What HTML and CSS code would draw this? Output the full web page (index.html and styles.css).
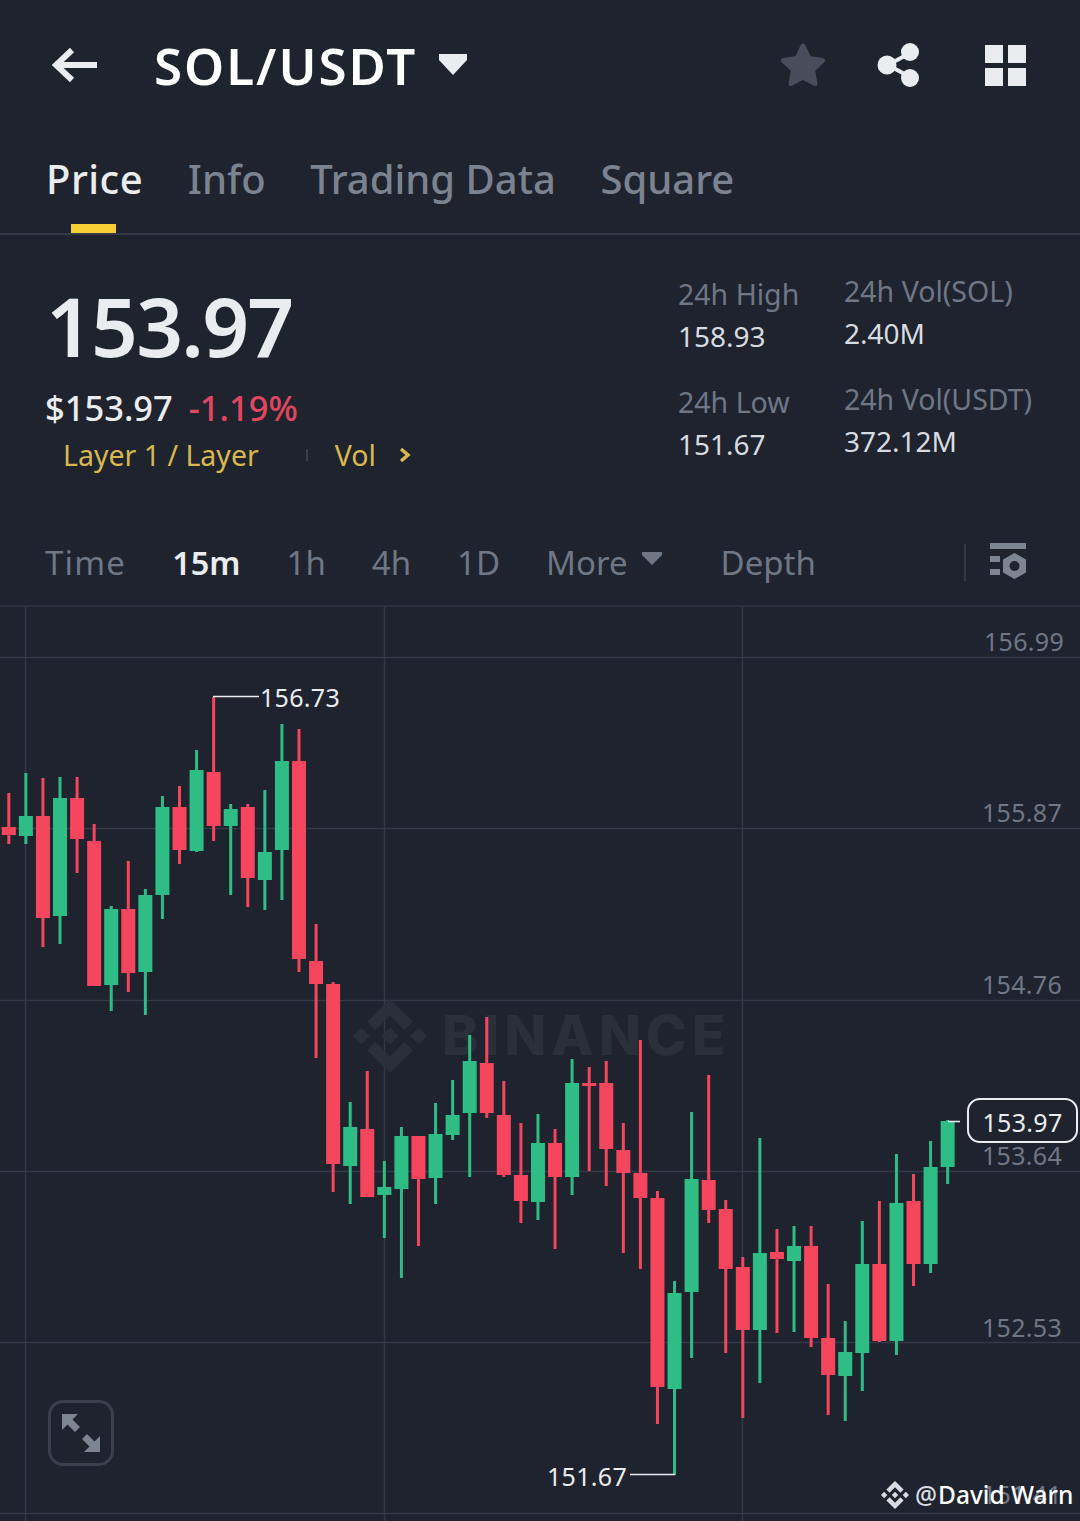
FILE: index.html
```html
<!DOCTYPE html>
<html lang="en">
<head>
    <meta charset="UTF-8">
    <meta name="viewport" content="width=device-width, initial-scale=1.0">
    <title>SOL/USDT</title>
    <link rel="stylesheet" href="styles.css">
</head>
<body>
    <div class="page">
        <header class="top-bar">
            <svg class="icon-back" viewBox="0 0 46 36"><path d="M20 3 L4 18 L20 33 M4 18 H45" /></svg>
            <h1 class="pair">SOL/USDT</h1>
            <svg class="icon-caret" viewBox="0 0 28 21"><path d="M0 0 H28 V6 L14 21 L0 6 Z" /></svg>
            <div class="top-actions">
                <svg class="icon-star" viewBox="0 0 46 46"><path d="M23 4 L29 16.5 L42.500 18.500 L32.500 28 L35 41.500 L23 35 L11 41.500 L13.500 28 L3.500 18.500 L17 16.500 Z" /></svg>
                <svg class="icon-share" viewBox="0 0 44 46">
                    <path d="M33 11 L11 23 L33 35" />
                    <circle cx="33" cy="10" r="9" />
                    <circle cx="10" cy="23" r="9.500" />
                    <circle cx="33" cy="36" r="9" />
                </svg>
                <svg class="icon-grid" viewBox="0 0 41 41">
                    <rect x="0" y="0" width="18" height="18" />
                    <rect x="23" y="0" width="18" height="18" />
                    <rect x="0" y="23" width="18" height="18" />
                    <rect x="23" y="23" width="18" height="18" />
                </svg>
            </div>
        </header>

        <nav class="tabs">
            <a class="tab tab-active">Price</a>
            <a class="tab">Info</a>
            <a class="tab">Trading Data</a>
            <a class="tab">Square</a>
        </nav>

        <section class="summary">
            <div class="summary-left">
                <div class="last-price">153.97</div>
                <div class="price-line">
                    <span class="price-usd">$153.97</span>
                    <span class="price-change">-1.19%</span>
                </div>
                <div class="tag-line">
                    <span>Layer 1 / Layer</span>
                    <i class="tag-sep"></i>
                    <span>Vol</span>
                    <svg class="icon-chevron" viewBox="0 0 12 16"><path d="M2 2 L9 8 L2 14" /></svg>
                </div>
            </div>
            <div class="stats stats-price">
                <div class="stat-label">24h High</div>
                <div class="stat-value">158.93</div>
                <div class="stat-label">24h Low</div>
                <div class="stat-value">151.67</div>
            </div>
            <div class="stats stats-vol">
                <div class="stat-label">24h Vol(SOL)</div>
                <div class="stat-value">2.40M</div>
                <div class="stat-label">24h Vol(USDT)</div>
                <div class="stat-value">372.12M</div>
            </div>
        </section>

        <div class="intervals">
            <span class="interval-time">Time</span>
            <span class="interval-active">15m</span>
            <span>1h</span>
            <span>4h</span>
            <span>1D</span>
            <span class="interval-more">More
                <svg class="icon-more" viewBox="0 0 20 13"><path d="M0 0 H20 V3 L10 13 L0 3 Z" /></svg>
            </span>
            <span class="interval-depth">Depth</span>
            <i class="interval-sep"></i>
            <svg class="icon-settings" viewBox="0 0 36 36">
                <rect x="0" y="0" width="36" height="6" />
                <rect x="0" y="13" width="10" height="6" />
                <rect x="0" y="26" width="10" height="6" />
                <path fill-rule="evenodd" d="M24.500 10 L36 16.500 V29.500 L24.500 36 L13 29.500 V16.500 Z M24.500 18 A5 5 0 1 0 24.500 28 A5 5 0 1 0 24.500 18 Z" />
            </svg>
        </div>

        <div class="chart">
            <svg class="chart-svg" viewBox="0 607 1080 914">
                <g class="grid">
                    <path d="M0 657.500 H1080 M0 828.500 H1080 M0 1000.500 H1080 M0 1171.500 H1080 M0 1342.500 H1080 M0 1513.500 H1080" />
                    <path d="M25.500 607 V1521 M384.500 607 V1521 M742.500 607 V1521" />
                </g>
                <g class="watermark">
                    <svg x="353" y="999" width="74" height="74" viewBox="0 0 126.610 126.610">
                        <path d="M38.730 53.200l24.590-24.580 24.600 24.600 14.300-14.310L63.320 0 24.430 38.900zM0 63.310l14.300-14.310 14.310 14.310-14.310 14.300zM38.730 73.410l24.590 24.590 24.600-24.600 14.310 14.290-38.900 38.910-38.910-38.880zM98 63.310l14.300-14.300 14.310 14.300-14.310 14.300zM77.830 63.300L63.320 48.780 48.810 63.300l14.510 14.500z" />
                    </svg>
                    <text x="442" y="1055">BINANCE</text>
                </g>
                <g id="candles"></g>
                <path class="marker-line" d="M213 696.500 H259 M630 1474.500 H675 M948 1121.500 H960" />
                <text class="marker-label" x="260" y="707">156.73</text>
                <text class="marker-label" x="547" y="1486">151.67</text>
                <g class="axis">
                    <text x="1064" y="651">156.99</text>
                    <text x="1062" y="822">155.87</text>
                    <text x="1062" y="994">154.76</text>
                    <text x="1062" y="1165">153.64</text>
                    <text x="1062" y="1337">152.53</text>
                    <text x="1062" y="1504">151.41</text>
                </g>
            </svg>
            <div class="price-tag">153.97</div>
            <button class="expand-btn">
                <svg viewBox="0 0 38 38">
                    <path d="M0 0 H16 L10.500 5.500 L18 13 L13 18 L5.500 10.500 L0 16 Z" />
                    <path d="M38 38 H22 L27.500 32.500 L20 25 L25 20 L32.500 27.500 L38 22 Z" />
                </svg>
            </button>
            <div class="credit">
                <svg viewBox="0 0 126.610 126.610">
                    <path d="M38.730 53.200l24.590-24.580 24.600 24.600 14.300-14.310L63.320 0 24.430 38.900zM0 63.310l14.300-14.310 14.310 14.310-14.310 14.300zM38.730 73.410l24.590 24.590 24.600-24.600 14.310 14.290-38.900 38.910-38.910-38.880zM98 63.310l14.300-14.300 14.310 14.300-14.310 14.300zM77.830 63.300L63.320 48.780 48.810 63.300l14.510 14.500z" />
                </svg>
                <span class="credit-at">@</span>
                <span>David Warn</span>
            </div>
        </div>
    </div>

    <script src="chart.js"></script>
</body>
</html>
```

FILE: styles.css
```css
* {
    box-sizing: border-box;
}
html, body {
    margin: 0;
    padding: 0;
    background-color: #1e232e;
}
.page {
    width: 1080px;
    height: 1521px;
    overflow: hidden;
    display: flex;
    flex-direction: column;
    font-family: "Noto Sans", "Liberation Sans", sans-serif;
    color: #eaecef;
}

/* Top bar */
.top-bar {
    height: 132px;
    display: flex;
    align-items: center;
    padding: 0 54px 2px 52px;
}
.icon-back {
    width: 46px;
    height: 36px;
    fill: none;
    stroke: #eaecef;
    stroke-width: 6;
}
.pair {
    margin: 0 22px 0 56px;
    font-size: 51px;
    line-height: 60px;
    font-weight: 600;
    letter-spacing: 2px;
    color: #fff;
}
.icon-caret {
    width: 28px;
    height: 21px;
    fill: #eaecef;
    margin-bottom: 2px;
}
.top-actions {
    margin-left: auto;
    display: flex;
    align-items: center;
    gap: 51px;
}
.icon-star {
    width: 46px;
    height: 46px;
    fill: #474d5a;
    stroke: #474d5a;
    stroke-width: 5;
    stroke-linejoin: round;
}
.icon-share {
    width: 44px;
    height: 46px;
    fill: #eaecef;
    stroke: #eaecef;
}
.icon-share path {
    fill: none;
    stroke-width: 4;
}
.icon-share circle {
    stroke: none;
}
.icon-grid {
    width: 41px;
    height: 41px;
    margin-left: 13px;
    fill: #eaecef;
}

/* Tabs */
.tabs {
    height: 103px;
    display: flex;
    gap: 44.500px;
    padding-left: 46px;
    border-bottom: 2px solid #333945;
}
.tab {
    position: relative;
    font-size: 40px;
    line-height: 94px;
    font-weight: 500;
    color: #7b8390;
    height: 101px;
}
.tab-active {
    color: #eaecef;
    letter-spacing: 0.500px;
}
.tab-active::after {
    content: "";
    position: absolute;
    left: 25px;
    bottom: 0;
    width: 45px;
    height: 9px;
    background-color: #f5d033;
}

/* Price summary */
.summary {
    height: 296px;
    display: flex;
    padding-left: 45px;
}
.summary-left {
    width: 633px;
}
.last-price {
    margin: 45px 0 0 1px;
    height: 90px;
    font-size: 82px;
    line-height: 90px;
    font-weight: 600;
    letter-spacing: -1.800px;
}
.price-line {
    margin-top: 14px;
    display: flex;
    gap: 16px;
    font-size: 34.500px;
    line-height: 48px;
    font-weight: 500;
}
.price-change {
    color: #e0475f;
}
.tag-line {
    margin: 1px 0 0 18px;
    display: flex;
    align-items: center;
    font-size: 28.500px;
    line-height: 44px;
    color: #d9b84f;
}
.tag-sep {
    width: 2px;
    height: 12px;
    margin: 0 27px 0 47px;
    background-color: #3a404c;
}
.icon-chevron {
    width: 12px;
    height: 16px;
    margin-left: 23px;
    fill: none;
    stroke: #d9b84f;
    stroke-width: 3.500;
}
.stats {
    padding-top: 36px;
}
.stats-price {
    width: 166px;
    padding-top: 39px;
}
.stat-label {
    font-size: 28.500px;
    line-height: 41px;
    color: #6f7785;
}
.stat-value {
    font-size: 28px;
    line-height: 42px;
    color: #d8dbe0;
    margin-bottom: 25px;
}

/* Interval row */
.intervals {
    height: 76px;
    display: flex;
    align-items: center;
    gap: 46px;
    padding: 0 54px 11px 45px;
    font-size: 33px;
    color: #6f7785;
    border-bottom: 2px solid #2b313c;
}
.interval-time {
    letter-spacing: 1.200px;
}
.interval-active {
    color: #eaecef;
    font-size: 32.500px;
    font-weight: 600;
}
.interval-more {
    display: flex;
    align-items: center;
    gap: 14px;
}
.icon-more {
    width: 20px;
    height: 13px;
    fill: #6f7785;
    margin-bottom: 8px;
}
.interval-depth {
    margin-left: 13px;
}
.interval-sep {
    margin-left: auto;
    width: 2px;
    height: 37px;
    margin-right: -22px;
    background-color: #333945;
}
.icon-settings {
    width: 36px;
    height: 36px;
    fill: #7d8593;
    margin-bottom: 4px;
}

/* Chart */
.chart {
    position: relative;
    flex: 1;
}
.chart-svg {
    position: absolute;
    left: 0;
    top: 0;
    width: 1080px;
    height: 914px;
}
.grid path {
    fill: none;
    stroke: #333945;
    stroke-width: 1.500;
}
.watermark {
    fill: #2a2f3a;
}
.watermark text {
    font-family: "Inter", "Liberation Sans", sans-serif;
    font-size: 55px;
    font-weight: 800;
    letter-spacing: 5px;
}
.wick-up, .body-up {
    fill: #2ebd85;
}
.wick-down, .body-down {
    fill: #f6465d;
}
.marker-line {
    fill: none;
    stroke: #eaecef;
    stroke-width: 1.500;
}
.marker-label {
    font-size: 25px;
    fill: #eaecef;
    letter-spacing: 0.300px;
}
.axis text {
    font-size: 25px;
    fill: #6f7785;
    text-anchor: end;
    letter-spacing: 0.300px;
}
.price-tag {
    position: absolute;
    left: 967px;
    top: 491px;
    width: 111px;
    height: 45px;
    border: 2px solid #eaecef;
    border-radius: 13px;
    background-color: #1e232e;
    font-size: 25px;
    line-height: 45px;
    text-align: center;
    letter-spacing: 0.300px;
}
.expand-btn {
    position: absolute;
    left: 48px;
    top: 793px;
    width: 66px;
    height: 66px;
    padding: 0;
    display: flex;
    align-items: center;
    justify-content: center;
    background: none;
    border: 3px solid #3a404c;
    border-radius: 15px;
}
.expand-btn svg {
    width: 38px;
    height: 38px;
    fill: #7d8593;
}
.credit {
    position: absolute;
    left: 881px;
    top: 868px;
    display: flex;
    align-items: center;
    gap: 5px;
    font-size: 24.500px;
    line-height: 40px;
    font-weight: 500;
    color: #fff;
    white-space: nowrap;
}
.credit svg {
    width: 28px;
    height: 28px;
    fill: #d8dbe0;
}
.credit-at {
    color: #d8dbe0;
    margin: 0 -4px 0 1px;
}
```

FILE: chart.js
```js
// [up, wickTop, wickBottom, bodyTop, bodyBottom] in page pixels
const CANDLES = [
    [0, 793, 844, 827, 835], [1, 773, 844, 816, 836], [0, 778, 947, 816, 918], [1, 777, 944, 798, 916],
    [0, 777, 873, 798, 839], [0, 824, 986, 841, 986], [1, 906, 1011, 909, 985], [0, 861, 992, 909, 973],
    [1, 889, 1015, 895, 972], [1, 796, 919, 807, 895], [0, 786, 864, 807, 850], [1, 750, 852, 770, 851],
    [0, 697, 841, 772, 826], [1, 804, 895, 809, 826], [0, 804, 907, 807, 878], [1, 790, 910, 852, 880],
    [1, 724, 900, 761, 850], [0, 729, 972, 761, 959], [0, 924, 1058, 961, 984], [0, 982, 1192, 984, 1164],
    [1, 1102, 1204, 1127, 1166], [0, 1071, 1197, 1129, 1197], [1, 1161, 1238, 1187, 1195], [1, 1127, 1278, 1136, 1189],
    [0, 1136, 1246, 1136, 1179], [1, 1103, 1204, 1134, 1178], [1, 1080, 1140, 1115, 1135], [1, 1035, 1177, 1061, 1113],
    [0, 1017, 1118, 1063, 1113], [0, 1081, 1177, 1115, 1175], [0, 1123, 1223, 1175, 1201], [1, 1114, 1220, 1143, 1202],
    [0, 1129, 1249, 1143, 1177], [1, 1059, 1195, 1083, 1177], [0, 1067, 1171, 1083, 1086], [0, 1061, 1186, 1083, 1149],
    [0, 1123, 1253, 1150, 1173], [0, 1040, 1269, 1173, 1198], [0, 1191, 1424, 1198, 1387], [1, 1281, 1475, 1293, 1389],
    [1, 1112, 1358, 1179, 1292], [0, 1075, 1223, 1180, 1210], [0, 1200, 1353, 1209, 1269], [0, 1257, 1418, 1267, 1330],
    [1, 1138, 1383, 1253, 1330], [0, 1229, 1333, 1252, 1259], [1, 1226, 1332, 1246, 1261], [0, 1226, 1347, 1246, 1338],
    [0, 1284, 1415, 1338, 1375], [1, 1321, 1421, 1352, 1376], [1, 1221, 1391, 1264, 1353], [0, 1201, 1342, 1264, 1341],
    [1, 1154, 1355, 1203, 1341], [0, 1174, 1286, 1201, 1264], [1, 1141, 1273, 1167, 1264], [1, 1120, 1184, 1121, 1167]
];

const FIRST_X = 8.8;
const STEP = 17.07;
const BODY_WIDTH = 14;
const WICK_WIDTH = 3;

function addRect(parent, className, x, y, width, height) {
    const rect = document.createElementNS('http://www.w3.org/2000/svg', 'rect');
    rect.setAttribute('class', className);
    rect.setAttribute('x', x);
    rect.setAttribute('y', y);
    rect.setAttribute('width', width);
    rect.setAttribute('height', height);
    parent.appendChild(rect);
}

const group = document.getElementById('candles');
CANDLES.forEach((c, i) => {
    const x = FIRST_X + i * STEP;
    const side = c[0] ? 'up' : 'down';
    addRect(group, 'wick-' + side, x - WICK_WIDTH / 2, c[1], WICK_WIDTH, c[2] - c[1]);
    addRect(group, 'body-' + side, x - BODY_WIDTH / 2, c[3], BODY_WIDTH, c[4] - c[3]);
});
```
